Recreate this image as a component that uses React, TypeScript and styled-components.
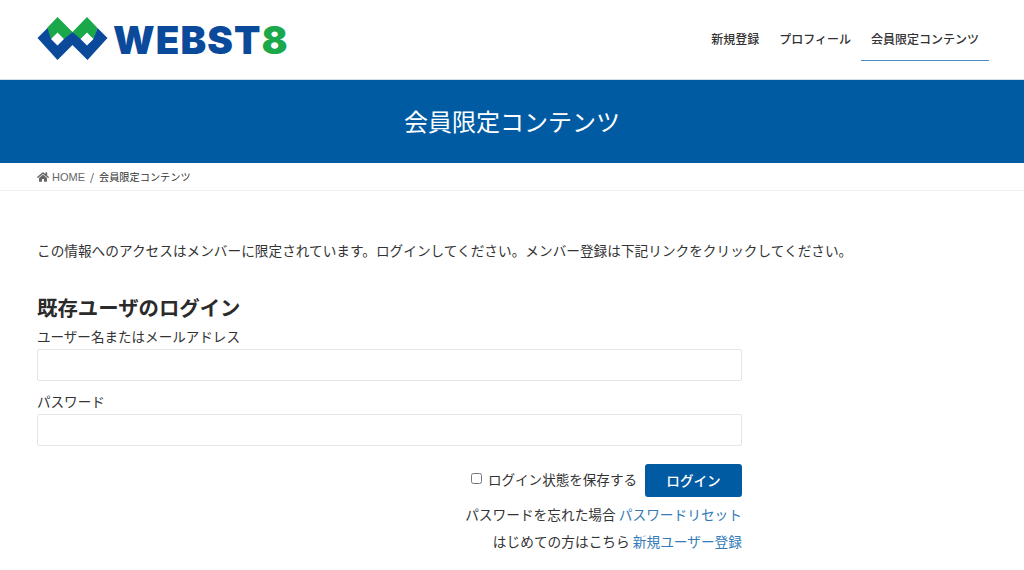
import React from 'react';
import styled, { createGlobalStyle } from 'styled-components';
import { FaHome } from 'react-icons/fa';

const GlobalStyle = createGlobalStyle`
    html, body {
        margin: 0;
        padding: 0;
        background: #fff;
    }
    body {
        font-family: "Noto Sans CJK JP", "Liberation Sans", sans-serif;
        color: #333;
        font-size: 14px;
    }
`;

const Header = styled.header`
    display: flex;
    justify-content: space-between;
    height: 80px;
    padding: 0 35px 0 37px;
    box-sizing: border-box;
    border-bottom: 1px solid #d5dde5;
`;

const Logo = styled.div`
    display: flex;
    align-items: center;
    gap: 5px;
    padding-bottom: 1px;
`;

const LogoText = styled.span`
    font-family: Inter, "Liberation Sans", sans-serif;
    font-weight: 900;
    font-size: 38.5px;
    line-height: 1;
    letter-spacing: 1.1px;
    padding-top: 3px;
    color: #0b4a9b;
    em {
        font-style: normal;
        color: #1aa84a;
    }
`;

const Nav = styled.nav`
    display: flex;
`;

const NavItem = styled.a<{ $active?: boolean }>`
    display: flex;
    align-items: center;
    height: 61px;
    padding: 16px 10px 0;
    box-sizing: border-box;
    font-size: 12px;
    font-weight: 500;
    color: #333;
    border-bottom: 1px solid ${(props) => (props.$active ? '#4a8bc9' : 'transparent')};
`;

const Banner = styled.div`
    display: flex;
    align-items: center;
    justify-content: center;
    height: 83px;
    padding-bottom: 2px;
    background: #005ba3;
    box-sizing: border-box;
    color: #fff;
    font-size: 24px;
`;

const Breadcrumb = styled.div`
    display: flex;
    align-items: center;
    gap: 5px;
    height: 28px;
    padding: 0 37px;
    box-sizing: border-box;
    border-bottom: 1px solid #f2f2f2;
    font-size: 10.2px;
    color: #333;
    a {
        display: flex;
        align-items: center;
        gap: 3px;
        color: #666;
        font-family: "Liberation Sans", sans-serif;
        font-size: 11px;
    }
`;

const Main = styled.main`
    padding: 48px 37px 0;
`;

const Notice = styled.p`
    margin: 0;
    font-size: 13.66px;
    line-height: 22px;
`;

const Title = styled.h2`
    margin: 30px 0 0;
    font-size: 20.4px;
    line-height: 32px;
    font-weight: 700;
    color: #2b2b2b;
`;

const Form = styled.form`
    width: 705px;
    margin-top: 3px;
`;

const Label = styled.label`
    display: block;
    font-size: 13.55px;
    line-height: 20px;
`;

const Input = styled.input`
    display: block;
    width: 100%;
    height: 32px;
    margin: 3px 0 10px;
    box-sizing: border-box;
    background: #fff;
    border: 1px solid #e5e5e5;
    border-radius: 2px;
`;

const SubmitRow = styled.div`
    display: flex;
    align-items: center;
    justify-content: flex-end;
    gap: 8px;
    margin-top: 18px;
    label {
        display: flex;
        align-items: center;
        gap: 6px;
        padding-bottom: 4px;
        font-size: 13.55px;
    }
    input {
        width: 11px;
        height: 11px;
        margin: 0;
    }
`;

const SubmitButton = styled.button`
    width: 97px;
    height: 33px;
    padding: 0 0 2px;
    background: #005ba3;
    color: #fff;
    border: none;
    border-radius: 3px;
    font-family: inherit;
    font-size: 13.6px;
    font-weight: 500;
`;

const HelpLine = styled.p`
    margin: 7px 0 0;
    text-align: right;
    font-size: 13.7px;
    line-height: 20px;
    a {
        color: #337ab7;
    }
`;

const LogoMark = () => (
    <svg width="71" height="44" viewBox="0 0 71 44">
        <path d="M20.5 0 L35.5 15 L27 24 L14 24 L10 11 Z M50 0 L60.5 11 L56.5 24 L43.5 24 L35.5 15 Z" fill="#1aa84a" />
        <path d="M0.5 21 L10.5 11 L14 22 L27 22 L35.5 15 L43.5 22 L56.5 22 L60.5 11 L70.5 21 L50.5 43 L35.5 28 L20.5 43 Z" fill="#0b4a9b" />
        <path d="M20.5 15.5 L27 22 L20.5 28.5 L14 22 Z M50 15.5 L56.5 22 L50 28.5 L43.5 22 Z" fill="#fff" />
    </svg>
);

const App = () => {
    return (
        <>
            <GlobalStyle />
            <Header>
                <Logo>
                    <LogoMark />
                    <LogoText>WEBST<em>8</em></LogoText>
                </Logo>
                <Nav>
                    <NavItem>新規登録</NavItem>
                    <NavItem>プロフィール</NavItem>
                    <NavItem $active>会員限定コンテンツ</NavItem>
                </Nav>
            </Header>
            <Banner>会員限定コンテンツ</Banner>
            <Breadcrumb>
                <a><FaHome size={12} /> HOME</a>
                <span>/</span>
                <span>会員限定コンテンツ</span>
            </Breadcrumb>
            <Main>
                <Notice>この情報へのアクセスはメンバーに限定されています。ログインしてください。メンバー登録は下記リンクをクリックしてください。</Notice>
                <Title>既存ユーザのログイン</Title>
                <Form>
                    <Label>ユーザー名またはメールアドレス</Label>
                    <Input type="text" />
                    <Label>パスワード</Label>
                    <Input type="password" />
                    <SubmitRow>
                        <label><input type="checkbox" /> ログイン状態を保存する</label>
                        <SubmitButton type="button">ログイン</SubmitButton>
                    </SubmitRow>
                    <HelpLine>パスワードを忘れた場合 <a>パスワードリセット</a></HelpLine>
                    <HelpLine>はじめての方はこちら <a>新規ユーザー登録</a></HelpLine>
                </Form>
            </Main>
        </>
    );
};

export default App;
